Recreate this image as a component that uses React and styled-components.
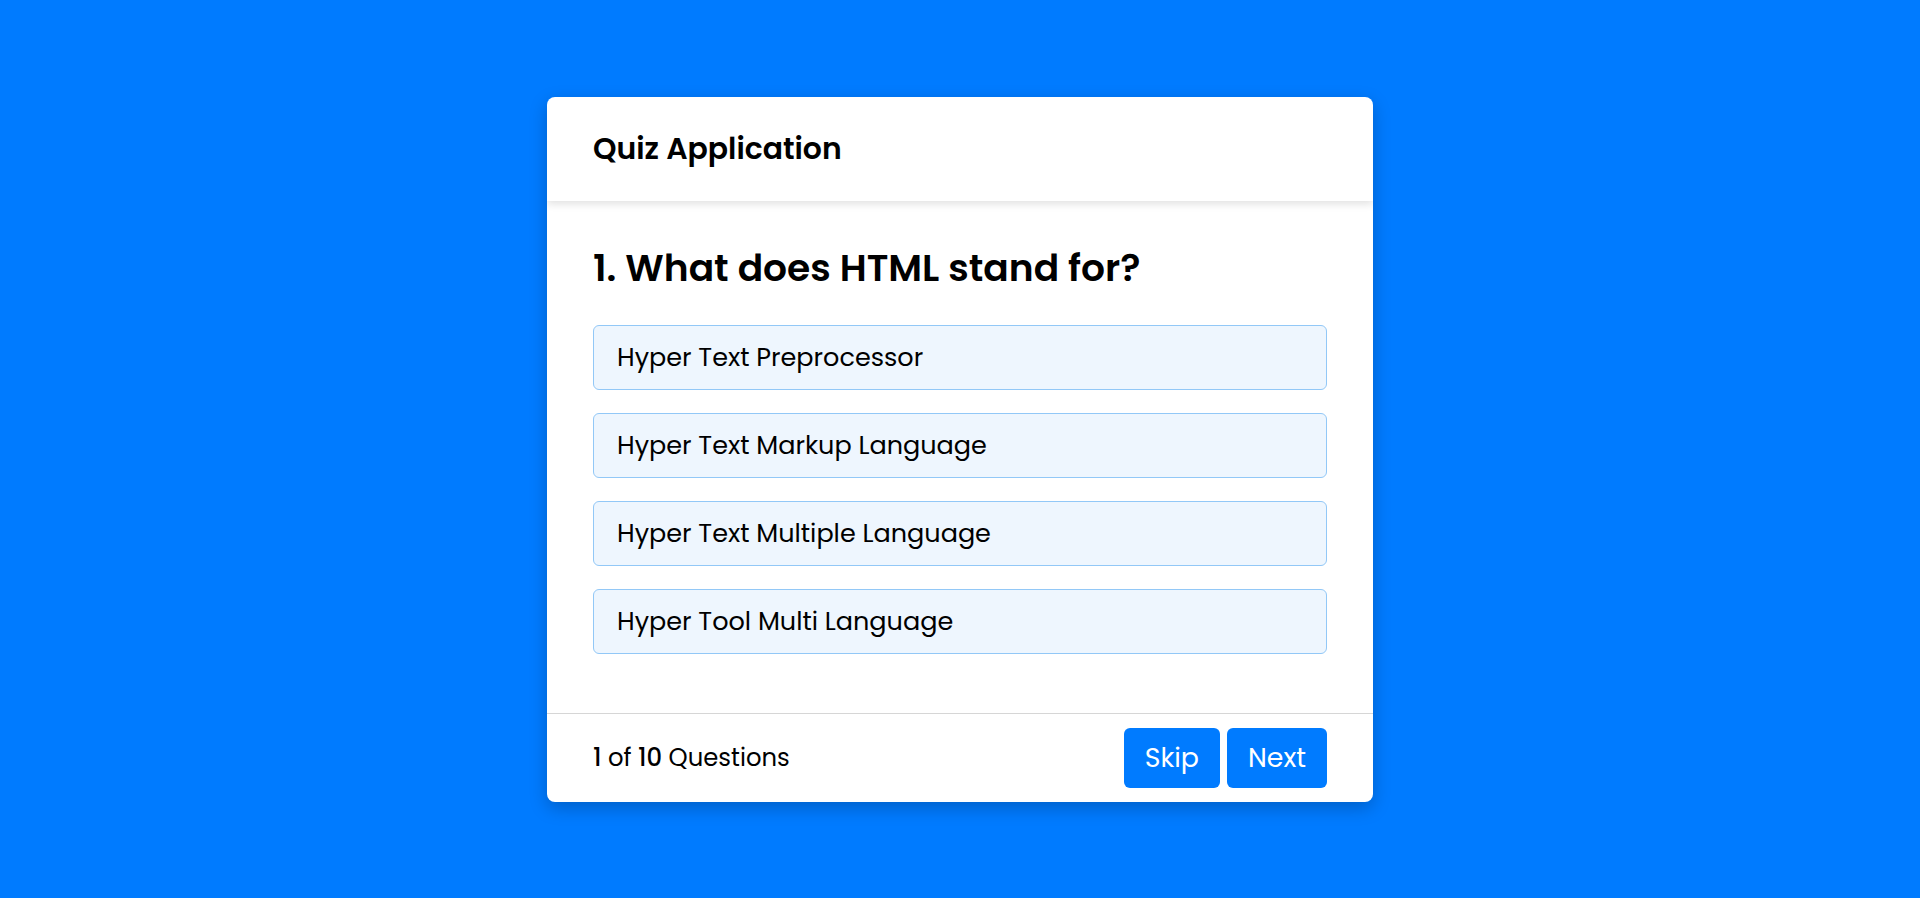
import React from 'react'
import styled, { createGlobalStyle } from 'styled-components'

const GlobalStyle = createGlobalStyle`
  * { box-sizing: border-box; }
  body {
    margin: 0;
    background: #007bff;
    font-family: "Poppins", "Inter", "Liberation Sans", sans-serif;
    color: #000;
  }
`;

const Page = styled.div`
    min-height: 100vh;
    display: flex;
    align-items: center;
    justify-content: center;
`;
const Card = styled.div`
    width: 826px;
    background: #fff;
    border-radius: 8px;
    box-shadow: 0 6px 18px rgba(0,0,0,0.22);
    overflow: hidden;
`;
const Header = styled.div`
    height: 104px;
    padding: 0 46px;
    display: flex;
    align-items: center;
    position: relative;
    z-index: 1;
    box-shadow: 0 3px 8px rgba(0,0,0,0.12);
`;
const Title = styled.h1`
    margin: 0;
    font-size: 29.9px;
    font-weight: 600;
`;
const Body = styled.div`
    padding: 43px 46px 59px;
`;
const Question = styled.h2`
    margin: 0 0 33px;
    font-size: 37.6px;
    line-height: 48px;
    font-weight: 600;
`;
const Options = styled.ul`
    list-style: none;
    margin: 0;
    padding: 0;
    display: flex;
    flex-direction: column;
    gap: 23px;
`;
const Option = styled.li`
    height: 65px;
    padding: 0 23px;
    display: flex;
    align-items: center;
    background: #eef6fe;
    border: 1px solid #92c8f7;
    border-radius: 6px;
    font-size: 25.5px;
    cursor: pointer;
`;
const Footer = styled.div`
    height: 89px;
    padding: 0 46px;
    border-top: 1px solid #d6d6d6;
    display: flex;
    align-items: center;
    justify-content: space-between;
`;
const Counter = styled.span`
    font-size: 24.3px;
    b { font-weight: 500; }
`;
const Actions = styled.div`
    display: flex;
    gap: 7px;
`;
const Button = styled.button`
    height: 60px;
    padding: 0 21px;
    border: none;
    border-radius: 6px;
    background: #007bff;
    color: #fff;
    font-family: inherit;
    font-size: 26.8px;
    cursor: pointer;
`;

const options = [
  'Hyper Text Preprocessor',
  'Hyper Text Markup Language',
  'Hyper Text Multiple Language',
  'Hyper Tool Multi Language',
]

const App = () => {
  return (
    <Page>
      <GlobalStyle />
      <Card>
        <Header>
          <Title>Quiz Application</Title>
        </Header>
        <Body>
          <Question>1. What does HTML stand for?</Question>
          <Options>
            {options.map(o => <Option key={o}>{o}</Option>)}
          </Options>
        </Body>
        <Footer>
          <Counter><b>1</b> of <b>10</b> Questions</Counter>
          <Actions>
            <Button>Skip</Button>
            <Button>Next</Button>
          </Actions>
        </Footer>
      </Card>
    </Page>
  )
}

export default App
